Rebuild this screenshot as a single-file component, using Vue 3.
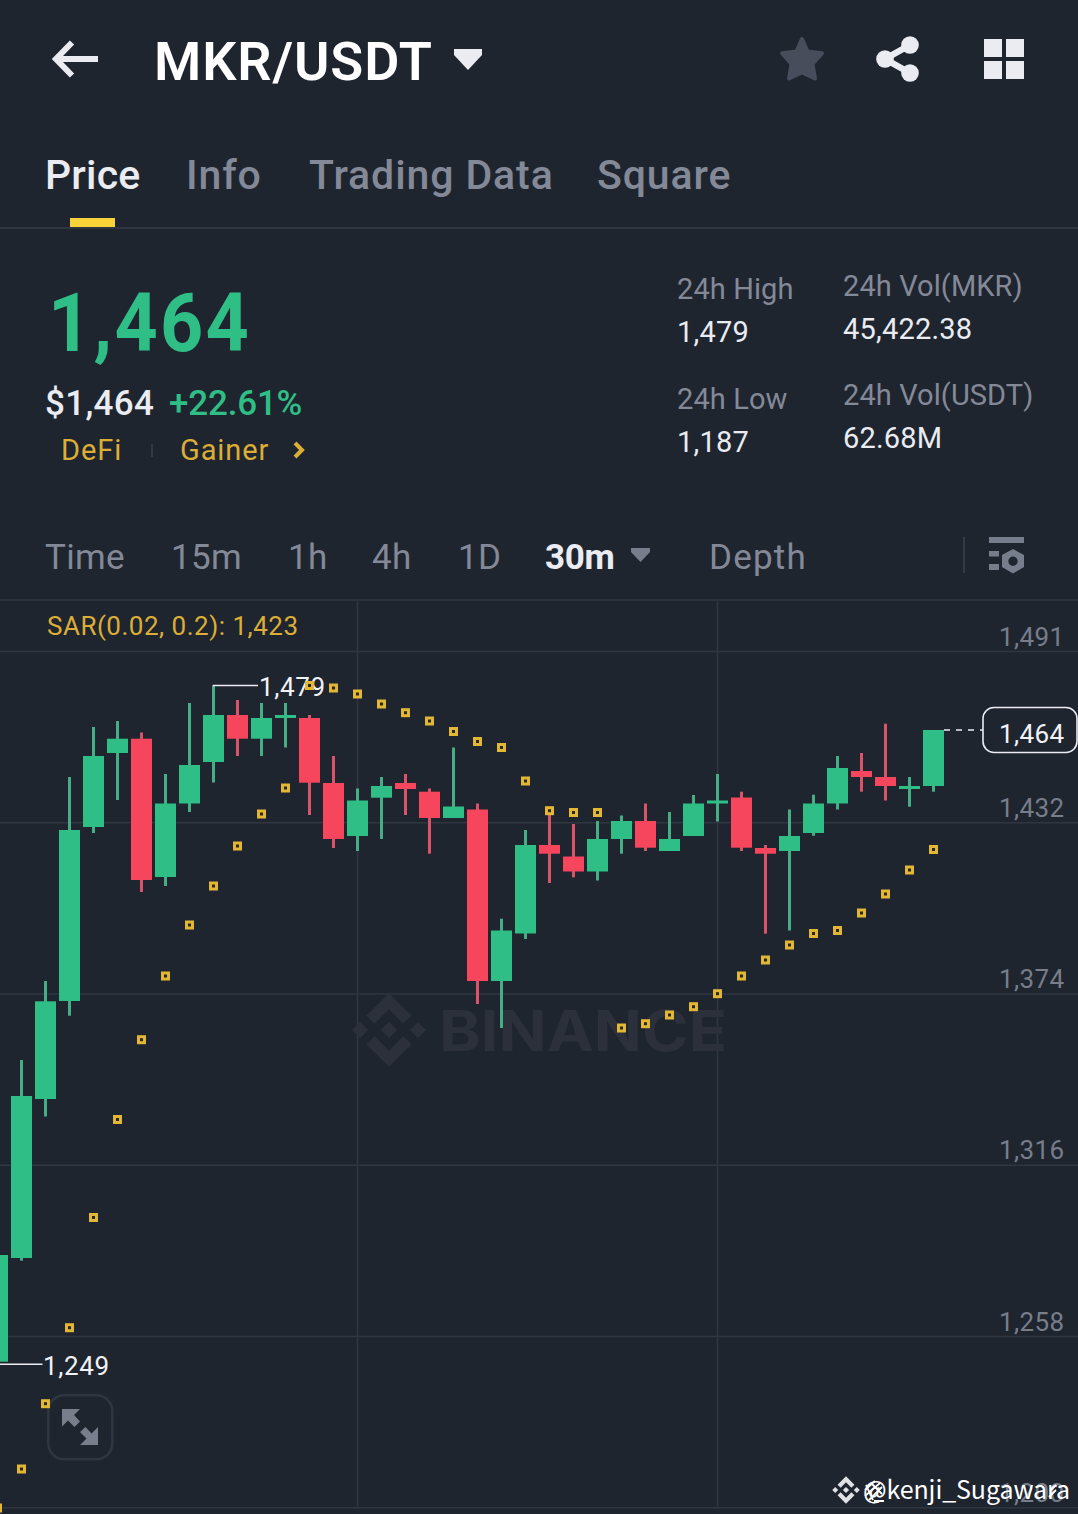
<script setup>
const tabs = ['Price', 'Info', 'Trading Data', 'Square']

const stats = [
  [
    { label: '24h High', value: '1,479' },
    { label: '24h Low', value: '1,187' }
  ],
  [
    { label: '24h Vol(MKR)', value: '45,422.38' },
    { label: '24h Vol(USDT)', value: '62.68M' }
  ]
]

const intervals = ['Time', '15m', '1h', '4h', '1D']

const gridLines = [651.5, 822.7, 994, 1165.3, 1336.5, 1507.7]
const axisLabels = ['1,491', '1,432', '1,374', '1,316', '1,258', '1,200']

// direction, wick top, wick bottom, body top, body bottom
const candles = [
  ['up', 1255, 1362, 1255, 1361.7],
  ['up', 1060, 1260.7, 1096, 1258],
  ['up', 981, 1116.5, 1001.3, 1099],
  ['up', 777, 1015.7, 830, 1001],
  ['up', 727, 833, 756, 827],
  ['up', 721, 800, 738.7, 753],
  ['down', 732.5, 892, 738.7, 880],
  ['up', 774, 886, 803.5, 877],
  ['up', 703, 812, 765, 803.5],
  ['up', 685, 782.5, 715, 762],
  ['down', 700, 756, 715, 738.7],
  ['up', 703, 756, 718, 738.7],
  ['up', 703, 747.5, 715, 718],
  ['down', 715, 815, 718, 782.7],
  ['down', 756, 848, 783, 839],
  ['up', 788.5, 851, 800.5, 836],
  ['up', 777, 839, 786, 797.7],
  ['down', 774, 815, 783, 789],
  ['down', 788.5, 853.7, 791.7, 818],
  ['up', 747.5, 818, 806.5, 818],
  ['down', 803.5, 1004, 809.5, 981],
  ['up', 918.7, 1028, 930.5, 981],
  ['up', 830, 939, 845, 933.5],
  ['down', 815, 883, 845, 853.7],
  ['down', 824, 877.3, 856.5, 871.5],
  ['up', 821, 880.5, 839, 871.5],
  ['up', 815.5, 853.7, 821, 839],
  ['down', 803.5, 851, 821, 847.7],
  ['up', 812, 851, 839, 851],
  ['up', 795, 836, 803.5, 836],
  ['up', 774, 821.5, 800.5, 803.5],
  ['down', 791.7, 851, 797.5, 847.7],
  ['down', 845, 933.7, 848, 853.7],
  ['up', 809.5, 930.5, 836, 851],
  ['up', 794.7, 835.7, 803.5, 833],
  ['up', 756, 809.5, 768, 803.5],
  ['down', 753, 791.7, 771, 777],
  ['down', 723.7, 800.5, 777, 786],
  ['up', 777, 806.7, 786, 789],
  ['up', 730, 791.7, 730, 786]
]

const sar = [
  1508, 1469, 1403.7, 1327.7, 1217.5, 1119.5, 1039.7, 976, 925, 886,
  846, 814, 788, 685.5, 688, 694, 704, 712.7, 721, 731.5,
  741.5, 747.5, 781, 810.7, 812.5, 812.5, 1028, 1023.7, 1015, 1006.7,
  993.7, 976, 960, 945, 933.5, 930.5, 913, 894, 870, 849.5
]

const candleX = (i) => i * 24 - 2.5

const logoPath = 'M0-110 68-43 43-19 0-62-43-19-68-43Z M0 110 68 43 43 19 0 62-43 19-68 43Z M0-25 25 0 0 25-25 0Z M-87-24-63 0-87 24-111 0Z M87-24 111 0 87 24 63 0Z'
</script>

<template>
  <div class="screen">
    <header class="header">
      <svg class="back" width="46" height="38" viewBox="0 0 46 38">
        <path d="M4 19H46M20 2.500 4 19 20 35.500" fill="none" stroke="#eaecf2" stroke-width="6" />
      </svg>
      <h1 class="pair">MKR/USDT</h1>
      <svg class="pair-caret" width="28" height="21" viewBox="0 0 28 21">
        <path d="M0 0H28V6L14 21 0 6Z" fill="#eaecf2" />
      </svg>
      <div class="actions">
        <svg width="46" height="46" viewBox="0 0 46 46">
          <path d="M23 3 28.500 15.500 43 17.200 33.500 28 36 42.500 23 36.500 10 42.500 12.500 28 3 17.200 17.500 15.500Z" fill="#474d5b" stroke="#474d5b" stroke-width="4" stroke-linejoin="round" />
        </svg>
        <svg width="44" height="46" viewBox="0 0 44 46">
          <path d="M35 9 10 23 35 37" fill="none" stroke="#eaecf2" stroke-width="6.500" />
          <circle cx="10" cy="23" r="8.800" fill="#eaecf2" />
          <circle cx="35" cy="9" r="8.800" fill="#eaecf2" />
          <circle cx="35" cy="37" r="8.800" fill="#eaecf2" />
        </svg>
        <svg width="40" height="40" viewBox="0 0 40 40">
          <path d="M0 0H18V18H0ZM22 0H40V18H22ZM0 22H18V40H0ZM22 22H40V40H22Z" fill="#eaecf2" />
        </svg>
      </div>
    </header>

    <nav class="tabs">
      <div v-for="(tab, i) in tabs" :key="tab" class="tab" :class="{ active: i === 0 }">{{ tab }}</div>
    </nav>

    <section class="summary">
      <div class="quote">
        <div class="price">1,464</div>
        <div class="change-row">
          <span class="fiat">$1,464</span>
          <span class="change">+22.61%</span>
        </div>
        <div class="tags">
          <span class="tag-defi">DeFi</span>
          <i class="tag-divider"></i>
          <span class="tag-gainer">Gainer</span>
          <svg width="12" height="18" viewBox="0 0 12 18">
            <path d="M2 2 9 9 2 16" fill="none" stroke="#dcae36" stroke-width="4" />
          </svg>
        </div>
      </div>
      <div v-for="(column, i) in stats" :key="i" class="stat-column">
        <div v-for="stat in column" :key="stat.label" class="stat">
          <div class="stat-label">{{ stat.label }}</div>
          <div class="stat-value">{{ stat.value }}</div>
        </div>
      </div>
    </section>

    <section class="intervals">
      <span v-for="item in intervals" :key="item">{{ item }}</span>
      <span class="selected">
        30m
        <svg width="19" height="14" viewBox="0 0 19 14">
          <path d="M0 0H19V4L9.500 14 0 4Z" fill="#777e8b" />
        </svg>
      </span>
      <span class="depth">Depth</span>
      <i class="divider"></i>
      <svg width="36" height="37" viewBox="0 0 36 37">
        <g fill="#777e8b">
          <path d="M0 0H35V6H0ZM0 14H10V19.500H0ZM0 27H10V33H0Z" />
          <path fill-rule="evenodd" d="M24 12 35 18V30L24 36.500 13 30V18ZM24 19.500A4.700 4.700 0 1 0 24 28.900 4.700 4.700 0 1 0 24 19.500Z" />
        </g>
      </svg>
    </section>

    <svg class="chart" width="1078" height="913" viewBox="0 601 1078 913">
      <!-- grid -->
      <g stroke="#303640" stroke-width="1.600">
        <line v-for="y in gridLines" :key="y" x1="0" x2="1078" :y1="y" :y2="y" />
        <line x1="357.500" x2="357.500" y1="601" y2="1508" />
        <line x1="717.500" x2="717.500" y1="601" y2="1508" />
      </g>

      <g class="watermark">
        <path :d="logoPath" transform="translate(389 1030) scale(.333)" />
        <text x="439" y="1051" textLength="288" lengthAdjust="spacingAndGlyphs">BINANCE</text>
      </g>

      <text class="indicator" x="47" y="635" textLength="251">SAR(0.02, 0.2): 1,423</text>

      <g class="axis">
        <text v-for="(label, i) in axisLabels" :key="label" x="999" :y="gridLines[i] - 6" textLength="65">{{ label }}</text>
      </g>

      <g v-for="(candle, i) in candles" :key="i" :class="candle[0]">
        <rect class="wick" :x="candleX(i) - 1.500" :y="candle[1]" width="3" :height="candle[2] - candle[1]" />
        <rect :x="candleX(i) - 10.500" :y="candle[3]" width="21" :height="candle[4] - candle[3]" />
      </g>

      <!-- high and low markers -->
      <path d="M213 685.500H258M0 1364.300H42.500" stroke="#eaecf2" stroke-width="1.600" />
      <g class="marker">
        <text x="259" y="696" textLength="66">1,479</text>
        <text x="43" y="1375" textLength="66">1,249</text>
      </g>

      <!-- last price -->
      <path d="M944 730H983" stroke="#eaecf2" stroke-width="1.600" stroke-dasharray="6 6" />
      <rect x="983" y="707.500" width="94" height="45" rx="11" fill="#1f252f" stroke="#eaecf2" stroke-width="1.600" />
      <text class="marker" x="999" y="743" textLength="65">1,464</text>

      <rect x="48.300" y="1395.300" width="64" height="64" rx="16" fill="none" stroke="#303641" stroke-width="2.500" />
      <path d="M62 1409H80L74 1415 80 1421.500 74.500 1427 68 1420.500 62 1426.500ZM98 1445H80L86.500 1438.500 80 1432 85.500 1427 91.500 1433.500 98 1427Z" fill="#787e8b" />

      <rect v-for="(y, i) in sar" :key="'sar' + i" class="sar" :x="candleX(i) - 3" :y="y - 3" width="6" height="6" />

      <g class="author">
        <path :d="logoPath" transform="translate(846 1490) scale(.124)" fill="#dfe1e5" />
        <text x="863" y="1499" textLength="207">@kenji_Sugawara</text>
        <path d="M865 1490 875 1481M865 1496 880 1483M869 1500 882 1487M872 1484 882 1494M866 1485 873 1500M874 1501 884 1501M1050 1491 1056 1485M1049 1497 1056 1490" stroke="#fff" stroke-width="1.800" />
      </g>
    </svg>
  </div>
</template>

<style>
body {
  margin: 0;
  background: #1f252f;
}
</style>

<style scoped>
.screen {
  width: 1078px;
  height: 1514px;
  overflow: hidden;
  background: #1f252f;
  color: #eaecf2;
  font-family: Roboto, 'Liberation Sans', sans-serif;
}

svg {
  display: block;
  flex-shrink: 0;
}

.header {
  display: flex;
  align-items: center;
  height: 118px;
  padding: 0 54px 0 52px;
}

.pair {
  width: 300px;
  margin: 4px 0 0 56px;
  color: #fff;
  font-size: 54px;
  font-weight: 600;
  letter-spacing: 0.9px;
}

.pair-caret { margin-top: 1px; }

.actions {
  display: flex;
  align-items: center;
  margin-left: auto;
}

.actions svg + svg { margin-left: 50px; }
.actions svg:last-child { margin-left: 65px; }

.tabs {
  display: grid;
  grid-template-columns: 141px 123px 288px 200px;
  box-sizing: border-box;
  height: 111px;
  padding: 37px 0 0 45px;
  border-bottom: 2px solid #303640;
}

.tab {
  position: relative;
  color: #848997;
  font-size: 41px;
  font-weight: 500;
  line-height: 40px;
  letter-spacing: 0.9px;
}

.tab.active {
  color: #eaecf2;
  letter-spacing: 0.2px;
}

.tab.active::after {
  content: '';
  position: absolute;
  bottom: 0;
  left: 25px;
  width: 45px;
  height: 9px;
  background: #f8d33a;
}

.summary {
  display: flex;
  height: 281px;
}

.quote {
  width: 632px;
  padding: 49px 0 0 45px;
}

/* condensed digits */
.price {
  margin-left: 3px;
  color: #2fbe85;
  font-size: 82px;
  font-weight: 700;
  line-height: 90px;
  letter-spacing: 2.5px;
  transform: scaleX(0.92);
  transform-origin: left;
}

.change-row {
  display: flex;
  gap: 15px;
  margin-top: 16px;
  font-size: 35px;
  font-weight: 500;
  line-height: 40px;
}

.fiat { letter-spacing: 0.3px; }

.change {
  color: #2fbe85;
  letter-spacing: -0.2px;
}

.tags {
  display: flex;
  align-items: center;
  margin: 8px 0 0 16px;
  color: #dcae36;
  font-size: 29px;
  line-height: 36px;
  letter-spacing: 0.9px;
}

.tag-defi { width: 90px; }

.tag-divider {
  width: 2px;
  height: 13px;
  background: #343a45;
}

.tag-gainer {
  width: 113px;
  margin-left: 27px;
}

.stat-column {
  width: 165px;
  padding-top: 42px;
  white-space: nowrap;
}

.stat-column + .stat-column {
  padding-top: 38.5px;
  padding-left: 1px;
}

.stat {
  height: 109.5px;
  font-size: 29px;
  line-height: 36px;
}

.stat-label {
  color: #848997;
  letter-spacing: 0.1px;
}

.stat-value {
  margin-top: 7px;
  letter-spacing: 0.2px;
}

.intervals {
  display: grid;
  grid-template-columns: 126px 117px 84px 86px 87px 164px 254px 26px 36px;
  align-items: center;
  box-sizing: border-box;
  height: 91px;
  padding: 0 0 0 45px;
  border-bottom: 2px solid #2c323c;
  color: #848997;
  font-size: 35px;
  letter-spacing: 0.3px;
}

.intervals span { padding-top: 6px; }
.intervals > svg { margin-top: 2px; }

.intervals .selected {
  display: flex;
  align-items: center;
  gap: 16px;
  color: #eaecf2;
  font-weight: 700;
  letter-spacing: -0.3px;
}

.intervals .selected svg { margin-top: -6px; }
.intervals .depth { letter-spacing: 1.2px; }

.divider {
  width: 2px;
  height: 36px;
  background: #343a45;
}

.watermark {
  fill: #2b303b;
  font-family: Inter, sans-serif;
  font-size: 56px;
  font-weight: 700;
}

.indicator {
  fill: #dcae36;
  font-size: 26px;
}

.axis {
  fill: #777d8a;
  font-size: 26px;
}

.marker {
  fill: #f0f2f6;
  font-size: 26px;
}

.up { fill: #2fbe85; }
.up .wick { fill: #46ae87; }
.down { fill: #f6465d; }
.down .wick { fill: #da5469; }

.sar {
  fill: #2b2818;
  stroke: #e2b737;
  stroke-width: 3px;
}

.author {
  fill: #fff;
  font-family: 'Noto Sans CJK SC', 'Noto Sans', sans-serif;
  font-size: 25px;
}
</style>
